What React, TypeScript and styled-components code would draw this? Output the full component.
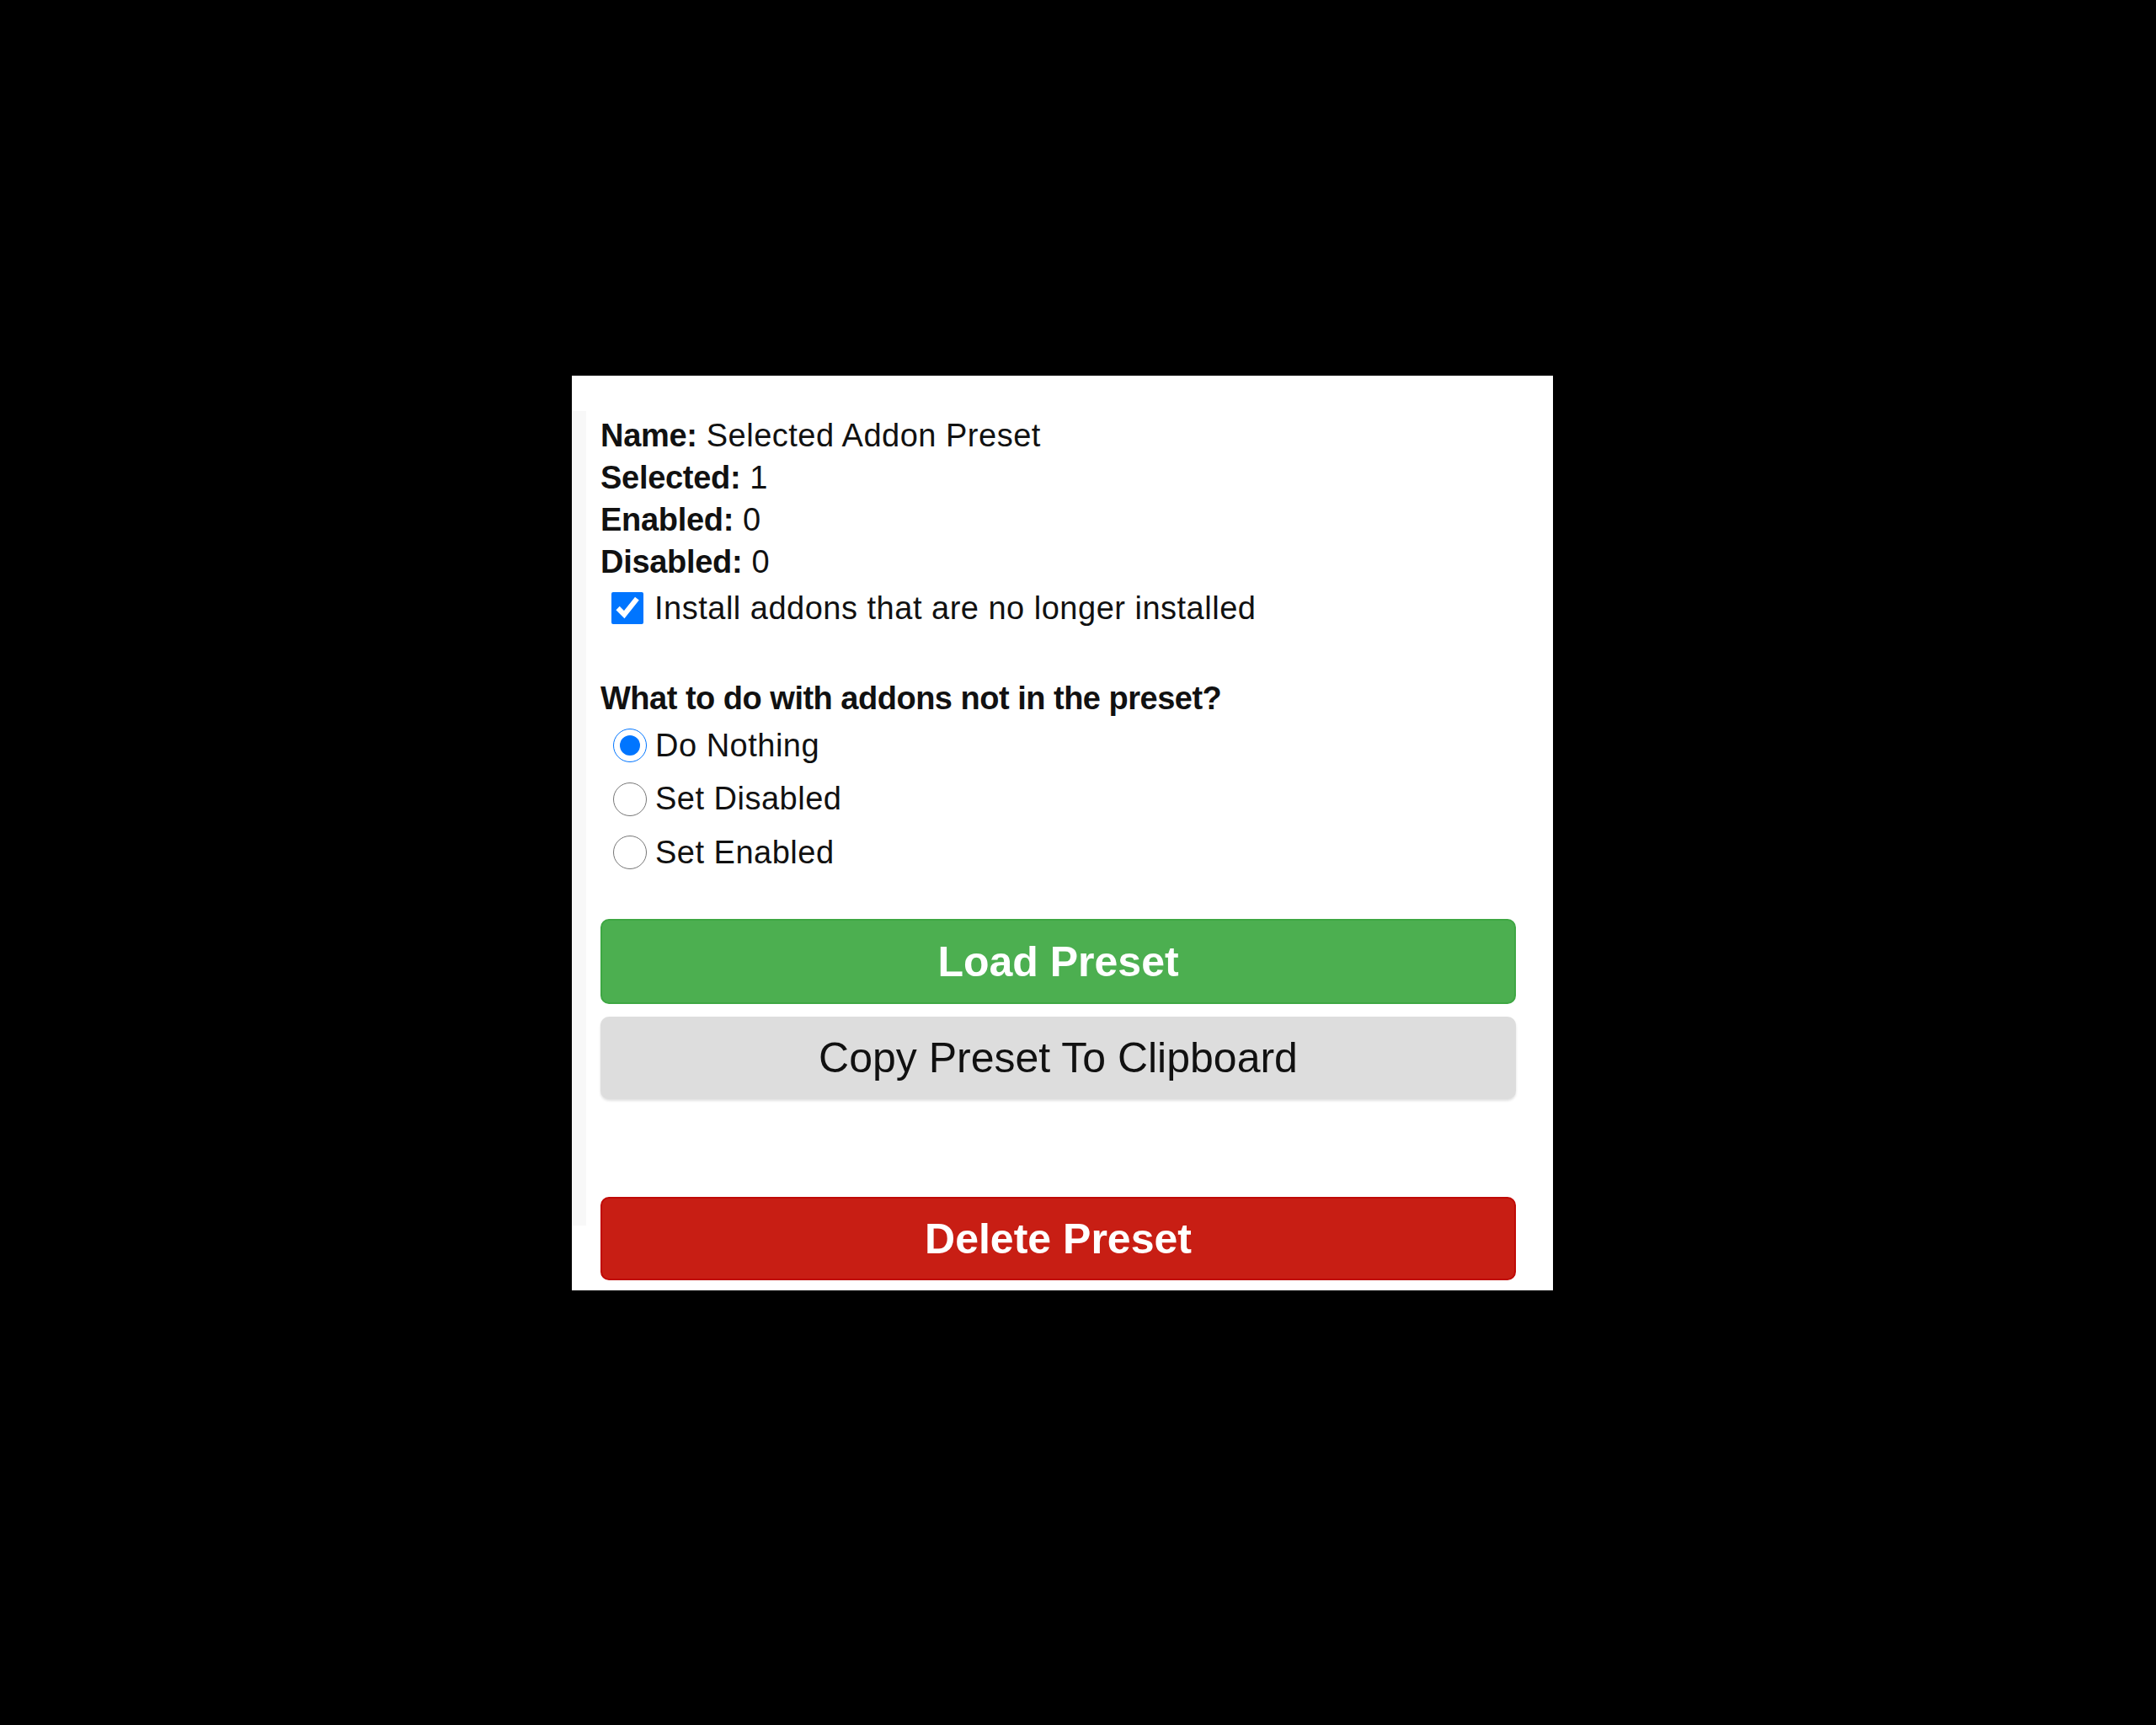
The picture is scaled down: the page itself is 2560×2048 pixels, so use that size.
import React, { useState } from "react";
import styled, { createGlobalStyle, css } from "styled-components";

const GlobalStyle = createGlobalStyle`
  html, body {
    margin: 0;
    padding: 0;
    background: #000;
  }
  body {
    font-family: "Liberation Sans", Arial, sans-serif;
    color: #111;
  }
`;

const Page = styled.div`
  min-height: 2048px;
  box-sizing: border-box;
  padding: 446px 0 0 679px;
`;

const Panel = styled.section`
  width: 1165px;
  height: 1086px;
  background: #fff;
  display: flex;
`;

const Gutter = styled.div`
  width: 17px;
  flex-shrink: 0;
  margin: 42px 0 77px;
  background: #f8f8f8;
`;

const Content = styled.div`
  flex: 1;
  display: flex;
  flex-direction: column;
  margin-top: 42px;
  padding: 4px 44px 0 17px;
`;

const InfoLine = styled.div`
  font-size: 38px;
  line-height: 50px;
  letter-spacing: 0.5px;
  white-space: nowrap;
`;

const Label = styled.b`
  font-weight: 700;
  letter-spacing: -0.3px;
`;

const CheckRow = styled.label`
  display: flex;
  align-items: center;
  height: 50px;
  margin-top: 5px;
  font-size: 38px;
  letter-spacing: 0.5px;
  cursor: pointer;
`;

const Checkbox = styled.input`
  width: 38px;
  height: 38px;
  margin: 0 13px 0 13px;
  accent-color: #0075ff;
`;

const Question = styled.div`
  margin-top: 57px;
  font-size: 38px;
  line-height: 50px;
  font-weight: 700;
  letter-spacing: -0.5px;
`;

const RadioList = styled.div`
  display: flex;
  flex-direction: column;
  gap: 13.5px;
  margin-top: 6px;
`;

const RadioRow = styled.label`
  display: flex;
  align-items: center;
  height: 50px;
  font-size: 38px;
  letter-spacing: 0.5px;
  cursor: pointer;
`;

const Radio = styled.input`
  width: 40px;
  height: 40px;
  margin: 0 10px 0 15px;
  accent-color: #0075ff;
`;

type Variant = "load" | "copy" | "delete";

const variants = {
  load: css`
    margin-top: 54px;
    height: 101px;
    background: #4caf50;
    border: 2px solid #3ea743;
    color: #fff;
    font-weight: 700;
  `,
  copy: css`
    margin-top: 15px;
    height: 98px;
    background: #dddddd;
    border: none;
    color: #111;
    font-weight: 400;
    box-shadow: 0 2px 3px rgba(0, 0, 0, 0.12);
  `,
  delete: css`
    margin-top: 116px;
    height: 99px;
    background: #c81e14;
    border: 2px solid #c00a06;
    color: #fff;
    font-weight: 700;
  `,
};

const ActionButton = styled.button<{ $variant: Variant }>`
  width: 100%;
  box-sizing: border-box;
  border-radius: 10px;
  font-family: "Liberation Sans", Arial, sans-serif;
  font-size: 50px;
  cursor: pointer;
  ${({ $variant }) => variants[$variant]}
`;

const options = ["Do Nothing", "Set Disabled", "Set Enabled"];

const App: React.FC = () => {
  const [installMissing, setInstallMissing] = useState(true);
  const [mode, setMode] = useState(options[0]);

  return (
    <Page>
      <GlobalStyle />
      <Panel>
        <Gutter />
        <Content>
          <InfoLine>
            <Label>Name:</Label> Selected Addon Preset
          </InfoLine>
          <InfoLine>
            <Label>Selected:</Label> 1
          </InfoLine>
          <InfoLine>
            <Label>Enabled:</Label> 0
          </InfoLine>
          <InfoLine>
            <Label>Disabled:</Label> 0
          </InfoLine>
          <CheckRow>
            <Checkbox
              type="checkbox"
              checked={installMissing}
              onChange={(e) => setInstallMissing(e.target.checked)}
            />
            Install addons that are no longer installed
          </CheckRow>

          <Question>What to do with addons not in the preset?</Question>
          <RadioList>
            {options.map((opt) => (
              <RadioRow key={opt}>
                <Radio
                  type="radio"
                  name="notInPreset"
                  checked={mode === opt}
                  onChange={() => setMode(opt)}
                />
                {opt}
              </RadioRow>
            ))}
          </RadioList>

          <ActionButton $variant="load">Load Preset</ActionButton>
          <ActionButton $variant="copy">Copy Preset To Clipboard</ActionButton>
          <ActionButton $variant="delete">Delete Preset</ActionButton>
        </Content>
      </Panel>
    </Page>
  );
};

export default App;
